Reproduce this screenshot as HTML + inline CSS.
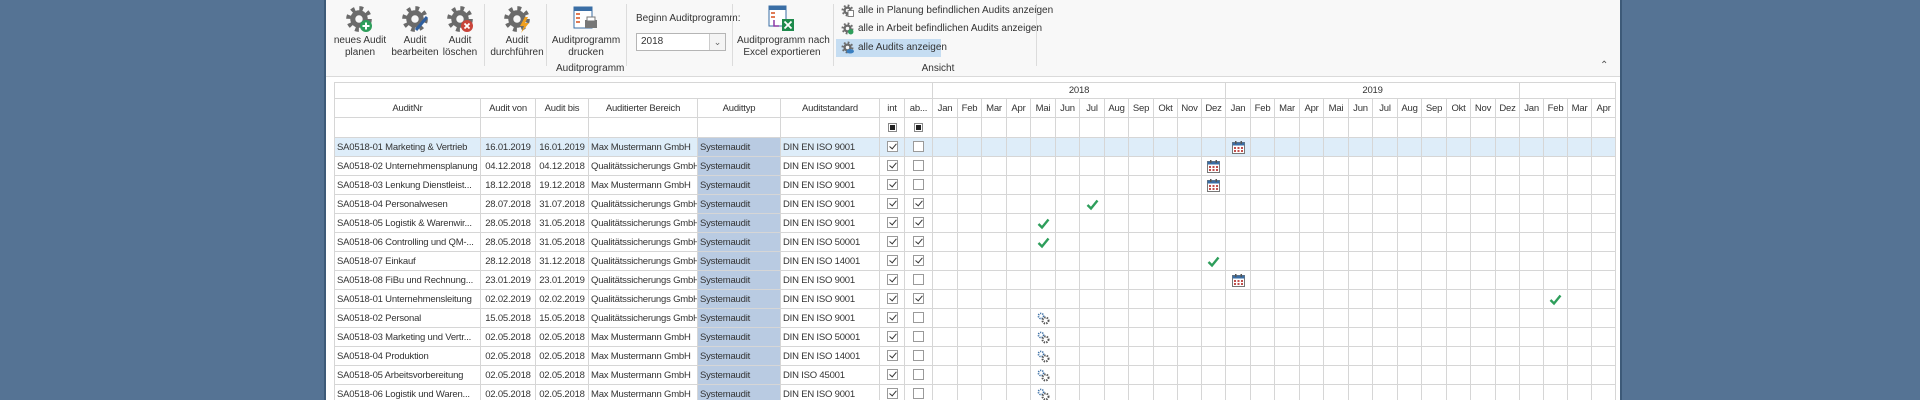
<!DOCTYPE html>
<html><head><meta charset="utf-8"><style>
*{margin:0;padding:0;box-sizing:border-box}
html,body{width:1920px;height:400px;overflow:hidden}
body{background:#557394;font-family:"Liberation Sans",sans-serif;font-size:10px;color:#333;position:relative}
#panel{position:absolute;left:324px;top:0;width:1298px;height:400px;background:#fff;border-left:2px solid #3d5a78;border-right:2px solid #3d5a78}
#ribbon{position:absolute;left:326px;top:0;width:1294px;height:77px;background:#f8f8f8;border-bottom:1px solid #dadada}
.a{position:absolute;text-align:center;line-height:12px;color:#333;white-space:nowrap;font-size:10px}
.sep{position:absolute;top:4px;width:1px;height:62px;background:#dcdcdc}
.ic{position:absolute}
#wrap{position:absolute;left:334px;top:82px;width:1282px;height:318px;overflow:hidden}
table{position:absolute;left:0;top:0;width:1281px;border-collapse:collapse;table-layout:fixed}
td{border:1px solid #d6d6d6;height:19px;padding:0 2px;white-space:nowrap;overflow:hidden;font-size:9.5px;color:#333;vertical-align:middle;letter-spacing:-0.2px}
tr.y td{height:16px;text-align:center}
tr.m td{height:19px;text-align:center;padding:0}
tr.f td{height:20px;padding:0;text-align:center}
td.c{text-align:center;padding:0}
td.t{background:#b9cbe2}
tr.s td{background:#deedf9}
tr.s td.t{background:#b9cbe2}
.cb{display:inline-block;width:11px;height:11px;border:1px solid #9a9a9a;background:#fff;position:relative;vertical-align:middle}
.cb.k::after{content:"";position:absolute;left:3px;top:0px;width:3px;height:6px;border:solid #333;border-width:0 1.5px 1.5px 0;transform:rotate(40deg)}
.fb{display:inline-block;width:9px;height:9px;border:1px solid #888;background:#fff;position:relative;vertical-align:middle}
.fb::after{content:"";position:absolute;left:1px;top:1px;width:5px;height:5px;background:#222}
td.i{padding:0;text-align:center}
td.i svg{vertical-align:middle}
</style></head><body>
<svg width="0" height="0" style="position:absolute">
<defs>
<symbol id="gear" viewBox="0 0 24 24"><circle cx="12" cy="12" r="7.5" fill="#6b6b6b"/><circle cx="12" cy="12" r="9" fill="none" stroke="#6b6b6b" stroke-width="4" stroke-dasharray="3.2 3.87"/><circle cx="12" cy="12" r="3.2" fill="#f8f8f8"/></symbol>
<symbol id="cal" viewBox="0 0 13 13"><rect x="0.5" y="1.5" width="12" height="11" fill="#fff" stroke="#777"/><rect x="0.5" y="1.5" width="12" height="3" fill="#3a6ea5"/><rect x="3" y="0" width="1.5" height="3" fill="#555"/><rect x="8.5" y="0" width="1.5" height="3" fill="#555"/><g fill="#c0504d"><rect x="2" y="6" width="2" height="2"/><rect x="5.5" y="6" width="2" height="2"/><rect x="9" y="6" width="2" height="2"/><rect x="2" y="9" width="2" height="2"/><rect x="5.5" y="9" width="2" height="2"/><rect x="9" y="9" width="2" height="2"/></g></symbol>
<symbol id="chk" viewBox="0 0 13 13"><path d="M1.5 7 L5 10.5 L11.5 2.5" fill="none" stroke="#2e9e5b" stroke-width="2.4"/></symbol>
<symbol id="g2" viewBox="0 0 13 13"><circle cx="4" cy="4" r="2.6" fill="none" stroke="#3a6ea5" stroke-width="1.6" stroke-dasharray="1.2 1"/><circle cx="8.5" cy="8.5" r="3" fill="none" stroke="#555" stroke-width="2" stroke-dasharray="1.4 1.1"/></symbol>
</defs></svg>
<div id="panel"></div>
<div id="ribbon"></div>
<svg class="ic" style="left:345px;top:5px" width="28" height="28"><use href="#gear"/><circle cx="21" cy="21" r="6" fill="#2e9e5b"/><path d="M21 17.5v7M17.5 21h7" stroke="#fff" stroke-width="2"/></svg>
<div class="a" style="left:330px;top:35px;width:60px">neues Audit<br>planen</div>
<svg class="ic" style="left:401px;top:5px" width="28" height="28"><use href="#gear"/><path d="M15 25 L26 12" stroke="#2f5f9f" stroke-width="3"/></svg>
<div class="a" style="left:390px;top:35px;width:50px">Audit<br>bearbeiten</div>
<svg class="ic" style="left:446px;top:5px" width="28" height="28"><use href="#gear"/><circle cx="21" cy="21" r="6" fill="#c9443a"/><path d="M18.5 18.5l5 5M23.5 18.5l-5 5" stroke="#fff" stroke-width="1.8"/></svg>
<div class="a" style="left:440px;top:35px;width:40px">Audit<br>löschen</div>
<div class="sep" style="left:484px"></div>
<svg class="ic" style="left:503px;top:5px" width="28" height="28"><use href="#gear"/><path d="M22 12 L17 21 L21 21 L18 28 L26 18 L22 18 L25 12Z" fill="#f0a020"/></svg>
<div class="a" style="left:487px;top:35px;width:60px">Audit<br>durchführen</div>
<div class="sep" style="left:546px"></div>
<svg class="ic" style="left:573px;top:6px" width="26" height="26"><rect x="1" y="1" width="18" height="21" fill="#fff" stroke="#3a6ea5"/><rect x="1" y="1" width="18" height="4" fill="#3a6ea5"/><g fill="#e07b55"><rect x="3" y="7" width="4" height="2"/><rect x="3" y="11" width="4" height="2"/><rect x="3" y="15" width="4" height="2"/></g><rect x="12" y="14" width="12" height="8" fill="#777"/><rect x="14" y="11" width="8" height="4" fill="#fff" stroke="#777"/></svg>
<div class="a" style="left:550px;top:35px;width:72px">Auditprogramm<br>drucken</div>
<div class="a" style="left:556px;top:63px;width:66px">Auditprogramm</div>
<div class="sep" style="left:626px"></div>
<div class="a" style="left:636px;top:13px;text-align:left">Beginn Auditprogramm:</div>
<div style="position:absolute;left:636px;top:33px;width:90px;height:18px;border:1px solid #b5b5b5;background:#fff;font-size:10px;line-height:16px;padding-left:4px">2018<div style="position:absolute;right:0;top:0;width:16px;height:16px;border-left:1px solid #ccc;background:#f4f4f4;text-align:center;font-size:9px;color:#666">&#8964;</div></div>
<div class="sep" style="left:732px"></div>
<svg class="ic" style="left:768px;top:5px" width="28" height="28"><rect x="1" y="1" width="17" height="20" fill="#fff" stroke="#3a6ea5"/><rect x="1" y="1" width="17" height="4" fill="#3a6ea5"/><g fill="#e07b55"><rect x="3" y="7" width="4" height="2"/><rect x="3" y="11" width="4" height="2"/></g><path d="M6 15v6h5" fill="none" stroke="#8b3aa5" stroke-width="1.5"/><rect x="14" y="14" width="12" height="12" fill="#1e8a4c"/><path d="M16.5 16.5l7 7M23.5 16.5l-7 7" stroke="#fff" stroke-width="1.8"/></svg>
<div class="a" style="left:737px;top:35px;width:90px">Auditprogramm nach<br>Excel exportieren</div>
<div class="sep" style="left:833px"></div>
<div style="position:absolute;left:836px;top:39px;width:105px;height:18px;background:#c5ddf2"></div>
<svg class="ic" style="left:841px;top:4px" width="13" height="13" viewBox="0 0 24 24"><use href="#gear"/><rect x="13" y="12" width="10" height="11" fill="#fff" stroke="#666" stroke-width="1.5"/></svg>
<div class="a" style="left:858px;top:5px;text-align:left">alle in Planung befindlichen Audits anzeigen</div>
<svg class="ic" style="left:841px;top:22px" width="13" height="13" viewBox="0 0 24 24"><use href="#gear"/><circle cx="18" cy="18" r="5" fill="#2e9e5b"/></svg>
<div class="a" style="left:858px;top:23px;text-align:left">alle in Arbeit befindlichen Audits anzeigen</div>
<svg class="ic" style="left:841px;top:41px" width="13" height="13" viewBox="0 0 24 24"><use href="#gear"/><ellipse cx="17" cy="19" rx="7" ry="4" fill="#3a7fc0"/></svg>
<div class="a" style="left:858px;top:42px;text-align:left">alle Audits anzeigen</div>
<div class="a" style="left:918px;top:63px;width:40px">Ansicht</div>
<div class="sep" style="left:1036px"></div>
<div class="a" style="left:1600px;top:60px;font-size:10px;color:#555">&#8963;</div>

<div id="wrap">
<table>
<colgroup><col style="width:146px"><col style="width:55px"><col style="width:53px"><col style="width:109px"><col style="width:83px"><col style="width:99px"><col style="width:25px"><col style="width:28px">
<col style="width:25px"><col style="width:24px"><col style="width:25px"><col style="width:24px"><col style="width:25px"><col style="width:24px"><col style="width:25px"><col style="width:24px"><col style="width:25px"><col style="width:24px"><col style="width:24px"><col style="width:24px">
<col style="width:25px"><col style="width:24px"><col style="width:25px"><col style="width:24px"><col style="width:25px"><col style="width:24px"><col style="width:25px"><col style="width:24px"><col style="width:25px"><col style="width:24px"><col style="width:25px"><col style="width:24px">
<col style="width:24px"><col style="width:24px"><col style="width:24px"><col style="width:24px"></colgroup>
<tr class="y"><td colspan="8"></td><td colspan="12">2018</td><td colspan="12">2019</td><td colspan="4"></td></tr>
<tr class="m"><td>AuditNr</td><td>Audit von</td><td>Audit bis</td><td>Auditierter Bereich</td><td>Audittyp</td><td>Auditstandard</td><td>int</td><td>ab...</td><td>Jan</td><td>Feb</td><td>Mar</td><td>Apr</td><td>Mai</td><td>Jun</td><td>Jul</td><td>Aug</td><td>Sep</td><td>Okt</td><td>Nov</td><td>Dez</td><td>Jan</td><td>Feb</td><td>Mar</td><td>Apr</td><td>Mai</td><td>Jun</td><td>Jul</td><td>Aug</td><td>Sep</td><td>Okt</td><td>Nov</td><td>Dez</td><td>Jan</td><td>Feb</td><td>Mar</td><td>Apr</td></tr>
<tr class="f"><td></td><td></td><td></td><td></td><td></td><td></td><td><span class="fb"></span></td><td><span class="fb"></span></td>
<td></td><td></td><td></td><td></td><td></td>
<td></td><td></td><td></td><td></td><td></td>
<td></td><td></td><td></td><td></td><td></td>
<td></td><td></td><td></td><td></td><td></td>
<td></td><td></td><td></td><td></td><td></td>
<td></td><td></td><td></td></tr>

<tr class="s"><td>SA0518-01 Marketing &amp; Vertrieb</td><td class="c">16.01.2019</td><td class="c">16.01.2019</td><td>Max Mustermann GmbH</td><td class="t">Systemaudit</td><td>DIN EN ISO 9001</td><td class="c"><span class="cb k"></span></td><td class="c"><span class="cb"></span></td>
<td></td><td></td><td></td><td></td><td></td>
<td></td><td></td><td></td><td></td><td></td>
<td></td><td></td>
<td class="i"><svg width="13" height="13"><use href="#cal"/></svg></td>
<td></td><td></td><td></td><td></td><td></td>
<td></td><td></td><td></td><td></td><td></td>
<td></td><td></td><td></td><td></td><td></td></tr>

<tr><td>SA0518-02 Unternehmensplanung</td><td class="c">04.12.2018</td><td class="c">04.12.2018</td><td>Qualitätssicherungs GmbH</td><td class="t">Systemaudit</td><td>DIN EN ISO 9001</td><td class="c"><span class="cb k"></span></td><td class="c"><span class="cb"></span></td>
<td></td><td></td><td></td><td></td><td></td>
<td></td><td></td><td></td><td></td><td></td>
<td></td>
<td class="i"><svg width="13" height="13"><use href="#cal"/></svg></td>
<td></td><td></td><td></td><td></td><td></td>
<td></td><td></td><td></td><td></td><td></td>
<td></td><td></td><td></td><td></td><td></td>
<td></td></tr>

<tr><td>SA0518-03 Lenkung Dienstleist...</td><td class="c">18.12.2018</td><td class="c">19.12.2018</td><td>Max Mustermann GmbH</td><td class="t">Systemaudit</td><td>DIN EN ISO 9001</td><td class="c"><span class="cb k"></span></td><td class="c"><span class="cb"></span></td>
<td></td><td></td><td></td><td></td><td></td>
<td></td><td></td><td></td><td></td><td></td>
<td></td>
<td class="i"><svg width="13" height="13"><use href="#cal"/></svg></td>
<td></td><td></td><td></td><td></td><td></td>
<td></td><td></td><td></td><td></td><td></td>
<td></td><td></td><td></td><td></td><td></td>
<td></td></tr>

<tr><td>SA0518-04 Personalwesen</td><td class="c">28.07.2018</td><td class="c">31.07.2018</td><td>Qualitätssicherungs GmbH</td><td class="t">Systemaudit</td><td>DIN EN ISO 9001</td><td class="c"><span class="cb k"></span></td><td class="c"><span class="cb k"></span></td>
<td></td><td></td><td></td><td></td><td></td>
<td></td>
<td class="i"><svg width="13" height="13"><use href="#chk"/></svg></td>
<td></td><td></td><td></td><td></td><td></td>
<td></td><td></td><td></td><td></td><td></td>
<td></td><td></td><td></td><td></td><td></td>
<td></td><td></td><td></td><td></td><td></td>
<td></td></tr>

<tr><td>SA0518-05 Logistik &amp; Warenwir...</td><td class="c">28.05.2018</td><td class="c">31.05.2018</td><td>Qualitätssicherungs GmbH</td><td class="t">Systemaudit</td><td>DIN EN ISO 9001</td><td class="c"><span class="cb k"></span></td><td class="c"><span class="cb k"></span></td>
<td></td><td></td><td></td><td></td>
<td class="i"><svg width="13" height="13"><use href="#chk"/></svg></td>
<td></td><td></td><td></td><td></td><td></td>
<td></td><td></td><td></td><td></td><td></td>
<td></td><td></td><td></td><td></td><td></td>
<td></td><td></td><td></td><td></td><td></td>
<td></td><td></td><td></td></tr>

<tr><td>SA0518-06 Controlling und QM-...</td><td class="c">28.05.2018</td><td class="c">31.05.2018</td><td>Qualitätssicherungs GmbH</td><td class="t">Systemaudit</td><td>DIN EN ISO 50001</td><td class="c"><span class="cb k"></span></td><td class="c"><span class="cb k"></span></td>
<td></td><td></td><td></td><td></td>
<td class="i"><svg width="13" height="13"><use href="#chk"/></svg></td>
<td></td><td></td><td></td><td></td><td></td>
<td></td><td></td><td></td><td></td><td></td>
<td></td><td></td><td></td><td></td><td></td>
<td></td><td></td><td></td><td></td><td></td>
<td></td><td></td><td></td></tr>

<tr><td>SA0518-07 Einkauf</td><td class="c">28.12.2018</td><td class="c">31.12.2018</td><td>Qualitätssicherungs GmbH</td><td class="t">Systemaudit</td><td>DIN EN ISO 14001</td><td class="c"><span class="cb k"></span></td><td class="c"><span class="cb k"></span></td>
<td></td><td></td><td></td><td></td><td></td>
<td></td><td></td><td></td><td></td><td></td>
<td></td>
<td class="i"><svg width="13" height="13"><use href="#chk"/></svg></td>
<td></td><td></td><td></td><td></td><td></td>
<td></td><td></td><td></td><td></td><td></td>
<td></td><td></td><td></td><td></td><td></td>
<td></td></tr>

<tr><td>SA0518-08 FiBu und Rechnung...</td><td class="c">23.01.2019</td><td class="c">23.01.2019</td><td>Qualitätssicherungs GmbH</td><td class="t">Systemaudit</td><td>DIN EN ISO 9001</td><td class="c"><span class="cb k"></span></td><td class="c"><span class="cb"></span></td>
<td></td><td></td><td></td><td></td><td></td>
<td></td><td></td><td></td><td></td><td></td>
<td></td><td></td>
<td class="i"><svg width="13" height="13"><use href="#cal"/></svg></td>
<td></td><td></td><td></td><td></td><td></td>
<td></td><td></td><td></td><td></td><td></td>
<td></td><td></td><td></td><td></td><td></td></tr>

<tr><td>SA0518-01 Unternehmensleitung</td><td class="c">02.02.2019</td><td class="c">02.02.2019</td><td>Qualitätssicherungs GmbH</td><td class="t">Systemaudit</td><td>DIN EN ISO 9001</td><td class="c"><span class="cb k"></span></td><td class="c"><span class="cb k"></span></td>
<td></td><td></td><td></td><td></td><td></td>
<td></td><td></td><td></td><td></td><td></td>
<td></td><td></td><td></td><td></td><td></td>
<td></td><td></td><td></td><td></td><td></td>
<td></td><td></td><td></td><td></td><td></td>
<td class="i"><svg width="13" height="13"><use href="#chk"/></svg></td>
<td></td><td></td></tr>

<tr><td>SA0518-02 Personal</td><td class="c">15.05.2018</td><td class="c">15.05.2018</td><td>Qualitätssicherungs GmbH</td><td class="t">Systemaudit</td><td>DIN EN ISO 9001</td><td class="c"><span class="cb k"></span></td><td class="c"><span class="cb"></span></td>
<td></td><td></td><td></td><td></td>
<td class="i"><svg width="13" height="13"><use href="#g2"/></svg></td>
<td></td><td></td><td></td><td></td><td></td>
<td></td><td></td><td></td><td></td><td></td>
<td></td><td></td><td></td><td></td><td></td>
<td></td><td></td><td></td><td></td><td></td>
<td></td><td></td><td></td></tr>

<tr><td>SA0518-03 Marketing und Vertr...</td><td class="c">02.05.2018</td><td class="c">02.05.2018</td><td>Max Mustermann GmbH</td><td class="t">Systemaudit</td><td>DIN EN ISO 50001</td><td class="c"><span class="cb k"></span></td><td class="c"><span class="cb"></span></td>
<td></td><td></td><td></td><td></td>
<td class="i"><svg width="13" height="13"><use href="#g2"/></svg></td>
<td></td><td></td><td></td><td></td><td></td>
<td></td><td></td><td></td><td></td><td></td>
<td></td><td></td><td></td><td></td><td></td>
<td></td><td></td><td></td><td></td><td></td>
<td></td><td></td><td></td></tr>

<tr><td>SA0518-04 Produktion</td><td class="c">02.05.2018</td><td class="c">02.05.2018</td><td>Max Mustermann GmbH</td><td class="t">Systemaudit</td><td>DIN EN ISO 14001</td><td class="c"><span class="cb k"></span></td><td class="c"><span class="cb"></span></td>
<td></td><td></td><td></td><td></td>
<td class="i"><svg width="13" height="13"><use href="#g2"/></svg></td>
<td></td><td></td><td></td><td></td><td></td>
<td></td><td></td><td></td><td></td><td></td>
<td></td><td></td><td></td><td></td><td></td>
<td></td><td></td><td></td><td></td><td></td>
<td></td><td></td><td></td></tr>

<tr><td>SA0518-05 Arbeitsvorbereitung</td><td class="c">02.05.2018</td><td class="c">02.05.2018</td><td>Max Mustermann GmbH</td><td class="t">Systemaudit</td><td>DIN ISO 45001</td><td class="c"><span class="cb k"></span></td><td class="c"><span class="cb"></span></td>
<td></td><td></td><td></td><td></td>
<td class="i"><svg width="13" height="13"><use href="#g2"/></svg></td>
<td></td><td></td><td></td><td></td><td></td>
<td></td><td></td><td></td><td></td><td></td>
<td></td><td></td><td></td><td></td><td></td>
<td></td><td></td><td></td><td></td><td></td>
<td></td><td></td><td></td></tr>

<tr><td>SA0518-06 Logistik und Waren...</td><td class="c">02.05.2018</td><td class="c">02.05.2018</td><td>Max Mustermann GmbH</td><td class="t">Systemaudit</td><td>DIN EN ISO 9001</td><td class="c"><span class="cb k"></span></td><td class="c"><span class="cb"></span></td>
<td></td><td></td><td></td><td></td>
<td class="i"><svg width="13" height="13"><use href="#g2"/></svg></td>
<td></td><td></td><td></td><td></td><td></td>
<td></td><td></td><td></td><td></td><td></td>
<td></td><td></td><td></td><td></td><td></td>
<td></td><td></td><td></td><td></td><td></td>
<td></td><td></td><td></td></tr>
</table>
</div>
</body></html>
